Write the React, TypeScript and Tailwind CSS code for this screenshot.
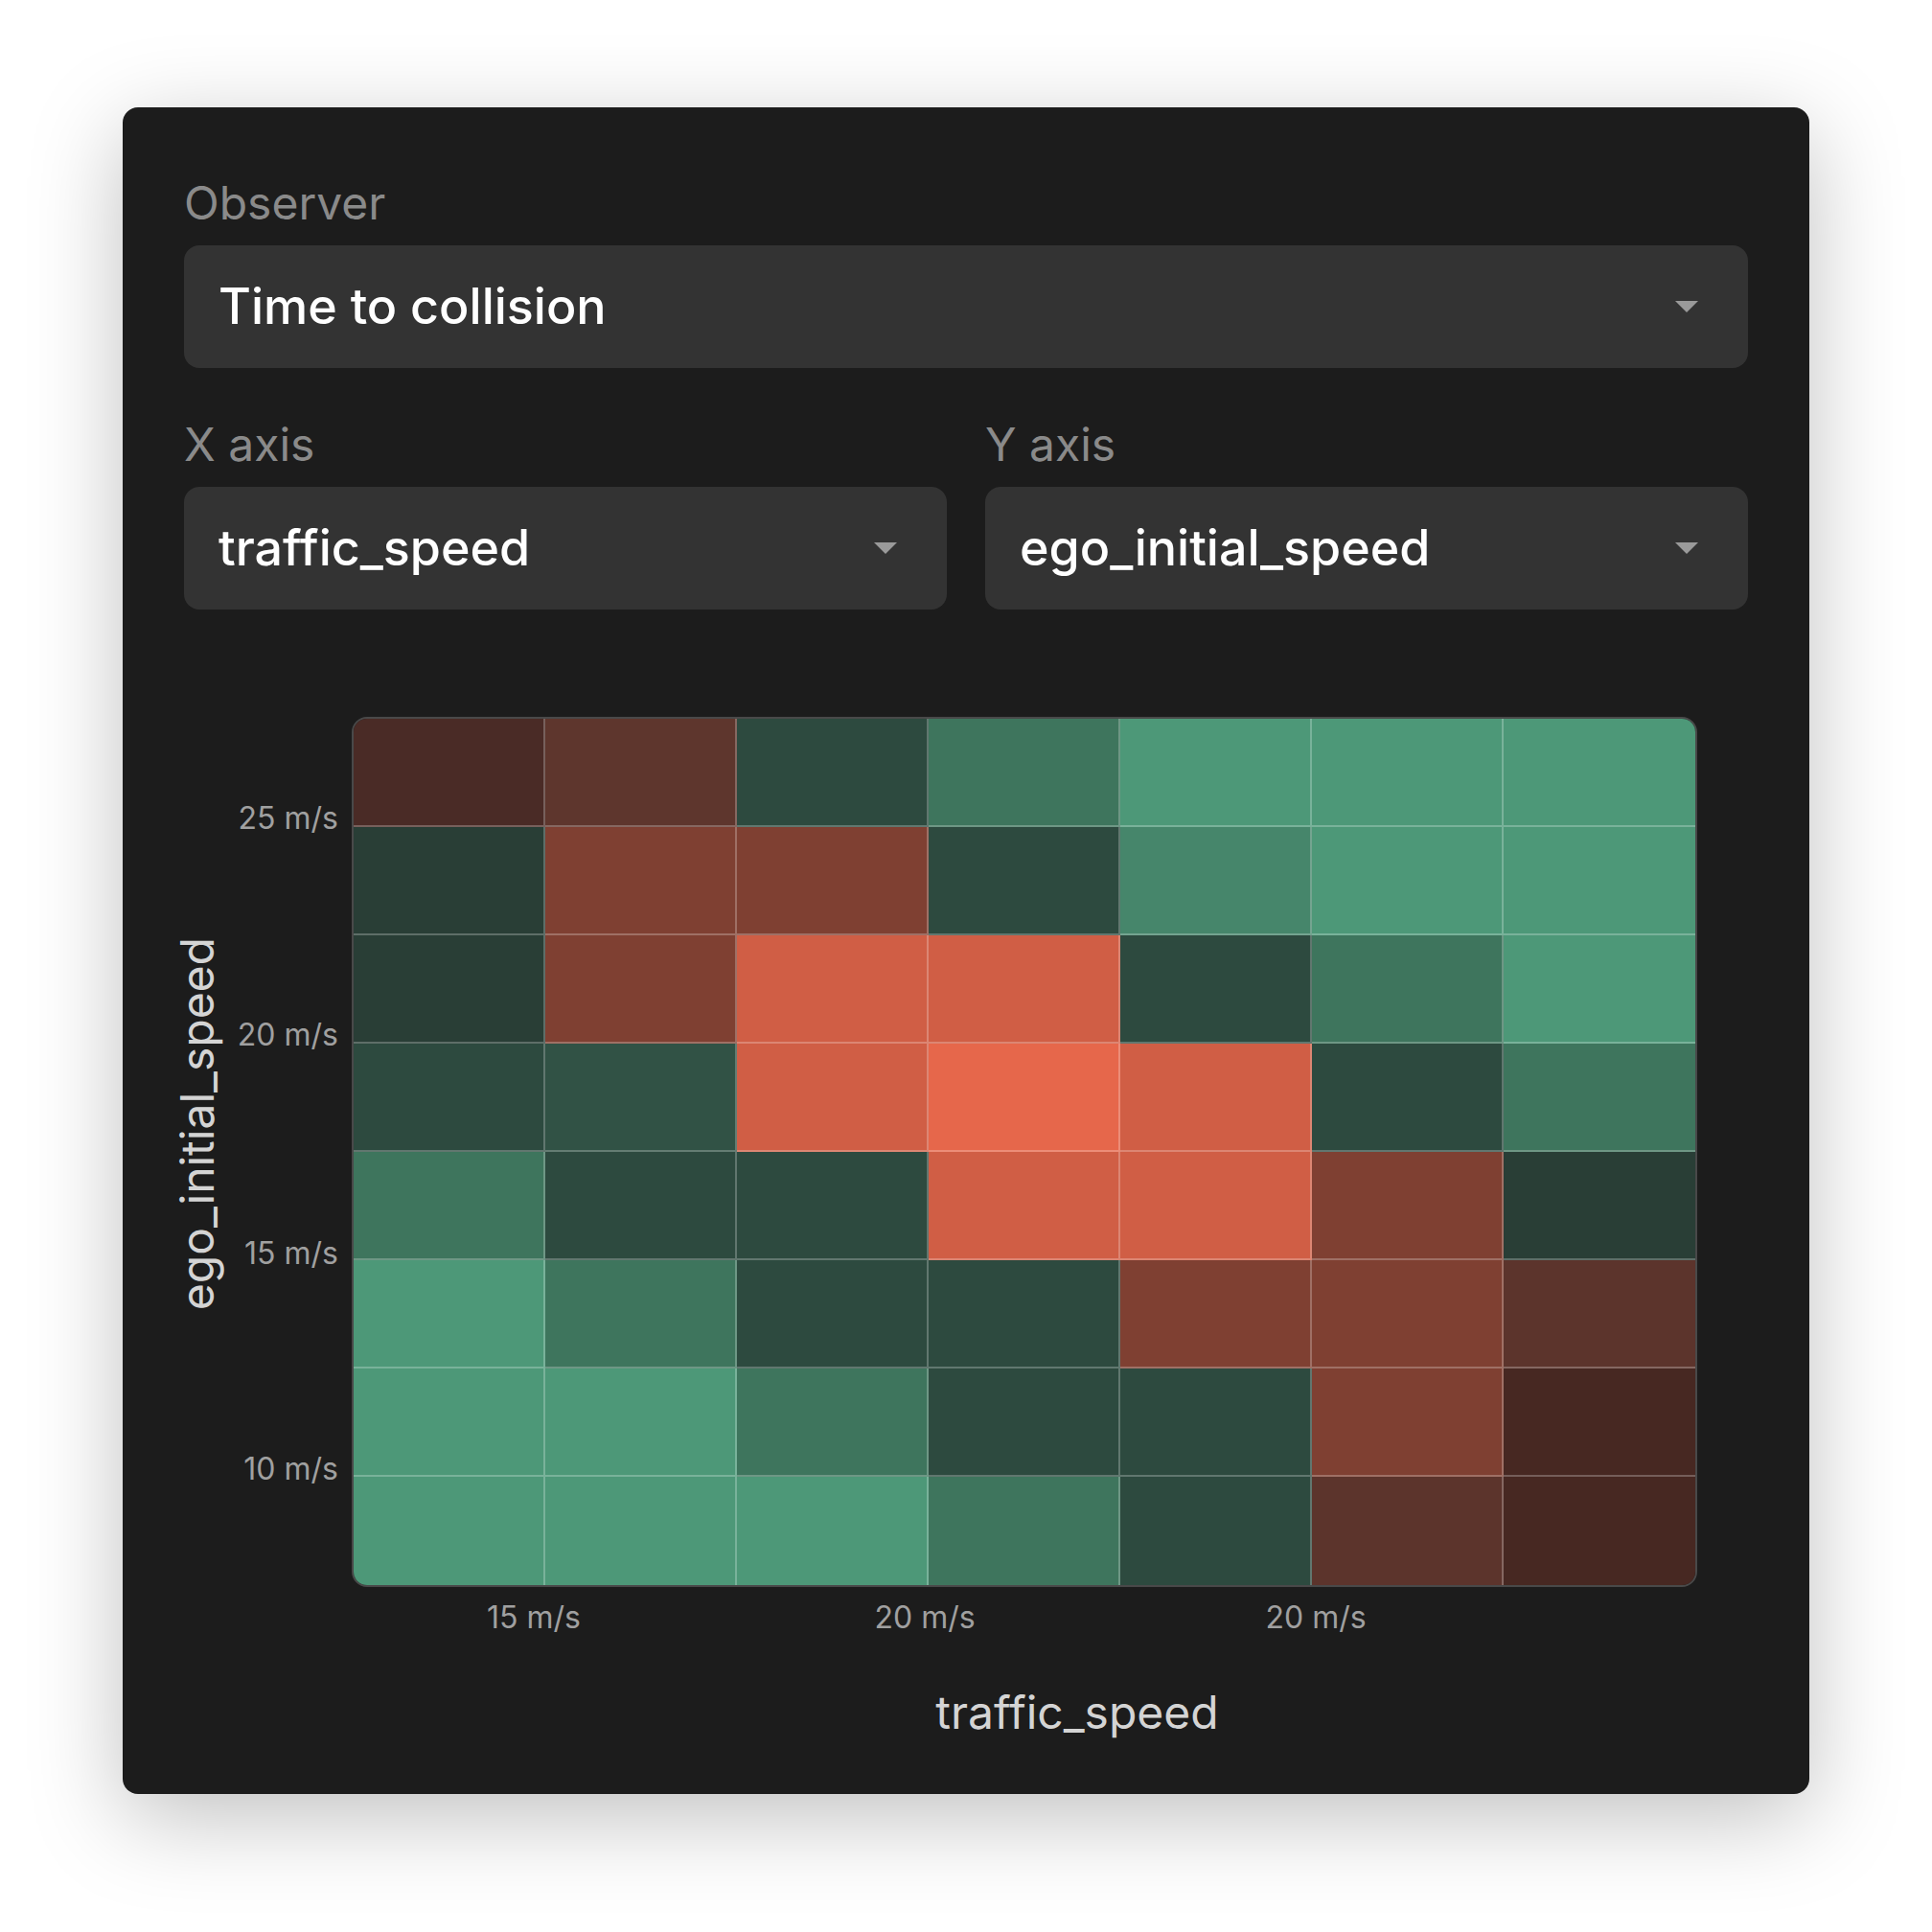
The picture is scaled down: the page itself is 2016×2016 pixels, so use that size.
import React from "react";

const C: Record<string, string> = {
  r0: "bg-[#4a2b26]",
  r0b: "bg-[#472822]",
  r1: "bg-[#5e362d]",
  r1b: "bg-[#5c342c]",
  r2: "bg-[#7f4032]",
  r3: "bg-[#d05e45]",
  r4: "bg-[#e6674b]",
  gx: "bg-[#293e36]",
  gd: "bg-[#2d4a3f]",
  gd2: "bg-[#315245]",
  gm: "bg-[#3e755d]",
  gm2: "bg-[#46866b]",
  gb: "bg-[#4d9878]",
};

const GRID: string[][] = [
  ["r0", "r1", "gd", "gm", "gb", "gb", "gb"],
  ["gx", "r2", "r2", "gd", "gm2", "gb", "gb"],
  ["gx", "r2", "r3", "r3", "gd", "gm", "gb"],
  ["gd", "gd2", "r3", "r4", "r3", "gd", "gm"],
  ["gm", "gd", "gd", "r3", "r3", "r2", "gx"],
  ["gb", "gm", "gd", "gd", "r2", "r2", "r1b"],
  ["gb", "gb", "gm", "gd", "gd", "r2", "r0b"],
  ["gb", "gb", "gb", "gm", "gd", "r1b", "r0b"],
];

function Caret() {
  return (
    <svg width="24" height="12" viewBox="0 0 24 12" className="shrink-0">
      <path d="M0 0H24L12 12Z" fill="#9a9a9a" />
    </svg>
  );
}

function Field({ label, value }: { label: string; value: string }) {
  return (
    <div className="flex flex-col">
      <div className="text-[48px] leading-[72px] text-[#8a8a8a] mb-2">{label}</div>
      <div className="h-[128px] rounded-2xl bg-[#333333] flex items-center justify-between pl-[36px] pr-[52px]">
        <span className="text-[52px] leading-none font-medium text-white whitespace-nowrap">{value}</span>
        <Caret />
      </div>
    </div>
  );
}

export default function App() {
  return (
    <div className="w-[2016px] h-[2016px] bg-white pt-[112px] pl-[128px] font-[Inter]">
      <div className="w-[1760px] h-[1760px] rounded-2xl bg-[#1c1c1c] shadow-[0_24px_96px_rgba(0,0,0,0.25)] px-[64px] pt-[64px] flex flex-col">
        <Field label="Observer" value="Time to collision" />
        <div className="grid grid-cols-2 gap-x-[40px] mt-[44px]">
          <Field label="X axis" value="traffic_speed" />
          <Field label="Y axis" value="ego_initial_speed" />
        </div>

        <div className="mt-[112px] flex items-start">
          <div className="w-[28px] h-[908px] flex items-center justify-start pb-[59px]">
            <span className="[writing-mode:vertical-rl] rotate-180 text-[48px] leading-[28px] text-[#d4d4d4] whitespace-nowrap">
              ego_initial_speed
            </span>
          </div>
          <div className="relative w-[147px] h-[908px] text-[32px] leading-[48px] text-[#a0a0a0]">
            <span className="absolute right-[14px] top-[82px] whitespace-nowrap">25 m/s</span>
            <span className="absolute right-[14px] top-[308px] whitespace-nowrap">20 m/s</span>
            <span className="absolute right-[14px] top-[536px] whitespace-nowrap">15 m/s</span>
            <span className="absolute right-[14px] top-[761px] whitespace-nowrap">10 m/s</span>
          </div>
          <div className="flex flex-col w-[1404px]">
            <div className="grid grid-cols-7 grid-rows-8 w-[1404px] h-[908px] rounded-2xl overflow-hidden border-2 border-white/20">
              {GRID.map((row, r) =>
                row.map((k, c) => (
                  <div
                    key={`${r}-${c}`}
                    className={`${C[k]} ${c < 6 ? "border-r-2" : ""} ${r < 7 ? "border-b-2" : ""} border-white/25`}
                  />
                ))
              )}
            </div>
            <div className="relative h-[56px] text-[32px] leading-[48px] text-[#a0a0a0]">
              <span className="absolute top-[8px] left-[190px] -translate-x-1/2 whitespace-nowrap">15 m/s</span>
              <span className="absolute top-[8px] left-[598px] -translate-x-1/2 whitespace-nowrap">20 m/s</span>
              <span className="absolute top-[8px] left-[1006px] -translate-x-1/2 whitespace-nowrap">20 m/s</span>
            </div>
            <div className="mt-[51px] pl-[110px] flex justify-center text-[48px] leading-none text-[#d4d4d4]">
              traffic_speed
            </div>
          </div>
        </div>
      </div>
    </div>
  );
}
